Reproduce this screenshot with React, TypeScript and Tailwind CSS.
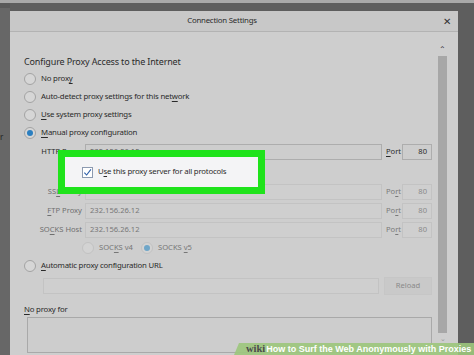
import React from 'react'

function Radio({ checked = false, disabled = false }: { checked?: boolean; disabled?: boolean }) {
  return (
    <span
      className={`flex h-[12px] w-[12px] shrink-0 items-center justify-center rounded-full border ${
        disabled ? 'border-[#c2c2c2] bg-[#d3d3d3]' : 'border-[#a3a3a3] bg-[#d6d6d6]'
      }`}
    >
      {checked && (
        <span className={`h-[6px] w-[6px] rounded-full ${disabled ? 'bg-[#6fa6c8]' : 'bg-[#2b7fc0]'}`} />
      )}
    </span>
  )
}

function U({ children }: { children: React.ReactNode }) {
  return <span className="underline underline-offset-[2px]">{children}</span>
}

function ProxyRow({
  label,
  value,
  active = false,
}: {
  label: React.ReactNode
  value: string
  active?: boolean
}) {
  return (
    <div className="flex h-[19px] items-center text-[7.6px]">
      <div className={`w-[61px] pr-[3px] text-right ${active ? 'text-[#2a2a2a]' : 'text-[#6f6f6f]'}`}>{label}</div>
      <div
        className={`flex h-[16px] w-[297px] items-center border px-[4px] ${
          active ? 'border-[#adadad] bg-[#cdcdcd] text-[#555]' : 'border-[#c3c3c3] bg-[#cfcfcf] text-[#777]'
        }`}
      >
        {value}
      </div>
      <div className={`w-[20px] pl-[4px] ${active ? 'text-[#2a2a2a]' : 'text-[#7a7a7a]'}`}>
        {active ? (
          <>
            <U>P</U>ort
          </>
        ) : (
          <>
            Po<U>r</U>t
          </>
        )}
      </div>
      <div
        className={`flex h-[16px] w-[30px] items-center justify-end border pr-[4px] ${
          active ? 'border-[#adadad] bg-[#cdcdcd] text-[#2a2a2a]' : 'border-[#c3c3c3] bg-[#cfcfcf] text-[#8a8a8a]'
        }`}
      >
        80
      </div>
    </div>
  )
}

export default function App() {
  return (
    <div className="relative h-[355px] w-[474px] overflow-hidden bg-[#5e5e5e] font-['Noto_Sans',sans-serif]">
      <div className="h-[3px] bg-[#a9a9a9]" />
      <div className="flex h-[352px]">
        {/* left strip behind the dialog */}
        <div className="relative w-[10px] border-t-[5px] border-[#5a5a5a] bg-[#676767]">
          <span className="absolute left-0 top-[123px] text-[8px] text-[#222]">r</span>
        </div>

        {/* dialog */}
        <div className="mt-[8px] flex w-[448px] flex-col bg-[#cecece]">
          <div className="relative flex h-[21px] items-center justify-center border-b border-[#b3b3b3] bg-[#c8c8c8] pr-[24px] text-[7.8px] tracking-[-0.2px] text-[#2a2a2a]">
            Connection Settings
            <span className="absolute right-[7px] top-[4px] text-[10px] leading-[12px] text-[#333]">✕</span>
          </div>

          <div className="flex flex-1">
            <div className="ml-[14px] w-[408px] pt-[22px] text-[7.8px] tracking-[-0.2px] text-[#2a2a2a]">
              <div className="flex h-[16px] items-center text-[9px] tracking-[-0.15px] text-[#2b2b2b]">
                Configure Proxy Access to the Internet
              </div>

              <div className="flex h-[18px] items-center gap-[5px]">
                <Radio />
                <span>
                  No prox<U>y</U>
                </span>
              </div>
              <div className="flex h-[18px] items-center gap-[5px]">
                <Radio />
                <span>
                  Auto-detect proxy settings for this net<U>w</U>ork
                </span>
              </div>
              <div className="flex h-[18px] items-center gap-[5px]">
                <Radio />
                <span>
                  <U>U</U>se system proxy settings
                </span>
              </div>
              <div className="flex h-[18px] items-center gap-[5px]">
                <Radio checked />
                <span>
                  <U>M</U>anual proxy configuration
                </span>
              </div>

              <div className="tracking-normal">
                <ProxyRow
                  active
                  label={
                    <>
                      HTTP Pro<U>x</U>y
                    </>
                  }
                  value="232.156.26.12"
                />
                <div className="h-[21px]" />
                <ProxyRow
                  label={
                    <>
                      SS<U>L</U> Proxy
                    </>
                  }
                  value="232.156.26.12"
                />
                <ProxyRow
                  label={
                    <>
                      <U>F</U>TP Proxy
                    </>
                  }
                  value="232.156.26.12"
                />
                <ProxyRow
                  label={
                    <>
                      SO<U>C</U>KS Host
                    </>
                  }
                  value="232.156.26.12"
                />

                <div className="flex h-[18px] items-center pl-[58px] text-[7.6px] text-[#777]">
                  <Radio disabled />
                  <span className="ml-[5px] w-[42px]">
                    SOC<U>K</U>S v4
                  </span>
                  <Radio checked disabled />
                  <span className="ml-[5px]">
                    SOCKS <U>v</U>5
                  </span>
                </div>
              </div>

              <div className="flex h-[18px] items-center gap-[5px]">
                <Radio />
                <span>
                  <U>A</U>utomatic proxy configuration URL
                </span>
              </div>

              <div className="flex h-[22px] items-center">
                <div className="ml-[19px] h-[16px] w-[336px] border border-[#c3c3c3] bg-[#cfcfcf]" />
                <div className="ml-[5px] flex h-[18px] w-[48px] items-center justify-center border border-[#c6c6c6] bg-[#c9c9c9] text-[7.6px] tracking-normal text-[#8a8a8a]">
                  Reload
                </div>
              </div>

              <div className="mt-[5px] flex h-[15px] items-center">
                <span>
                  <U>N</U>o proxy for
                </span>
              </div>
              <div className="ml-[3px] h-[36px] w-[405px] border border-[#a9a9a9] bg-[#cdcdcd]" />
            </div>

            {/* scrollbar */}
            <div className="ml-[6px] flex w-[9px] flex-col items-center pt-[12px]">
              <span className="h-[10px] text-[8px] leading-[10px] text-[#333]">⌃</span>
              <div className="mt-[2px] h-[277px] w-[9px] bg-[#a7a7a7]" />
              <span className="mt-[2px] text-[7px] leading-[8px] text-[#999]">⌄</span>
            </div>
          </div>
        </div>
      </div>

      {/* highlight box */}
      <div className="absolute left-[58px] top-[150px] flex h-[44px] w-[207px] items-center border-[7px] border-[#1fe31b] bg-[#f4f4f6] pl-[17px]">
        <span className="flex h-[11px] w-[11px] items-center justify-center border border-[#8c9ab0] bg-white">
          <svg viewBox="0 0 10 10" className="h-[9px] w-[9px]">
            <path d="M1.5 5.2 L4 7.8 L8.8 1.5" fill="none" stroke="#2d5ea8" strokeWidth="1.2" />
          </svg>
        </span>
        <span className="ml-[5px] whitespace-nowrap text-[7.8px] tracking-[-0.2px] text-[#2a2a2a]">
          U<U>s</U>e this proxy server for all protocols
        </span>
      </div>

      {/* watermark banner */}
      <div className="absolute bottom-0 left-[234px] flex h-[12px] w-[240px] items-center overflow-hidden whitespace-nowrap bg-[#9cc67c]/90 pl-[12px] [clip-path:polygon(5px_0,100%_0,100%_100%,0_100%)]">
        <span className="font-['Liberation_Serif',serif] text-[10.5px] font-bold leading-none text-[#4b4b4b]">wiki</span>
        <span className="ml-[1px] font-['Liberation_Sans',sans-serif] text-[9px] font-bold leading-none text-white">
          How to Surf the Web Anonymously with Proxies
        </span>
      </div>
    </div>
  )
}
